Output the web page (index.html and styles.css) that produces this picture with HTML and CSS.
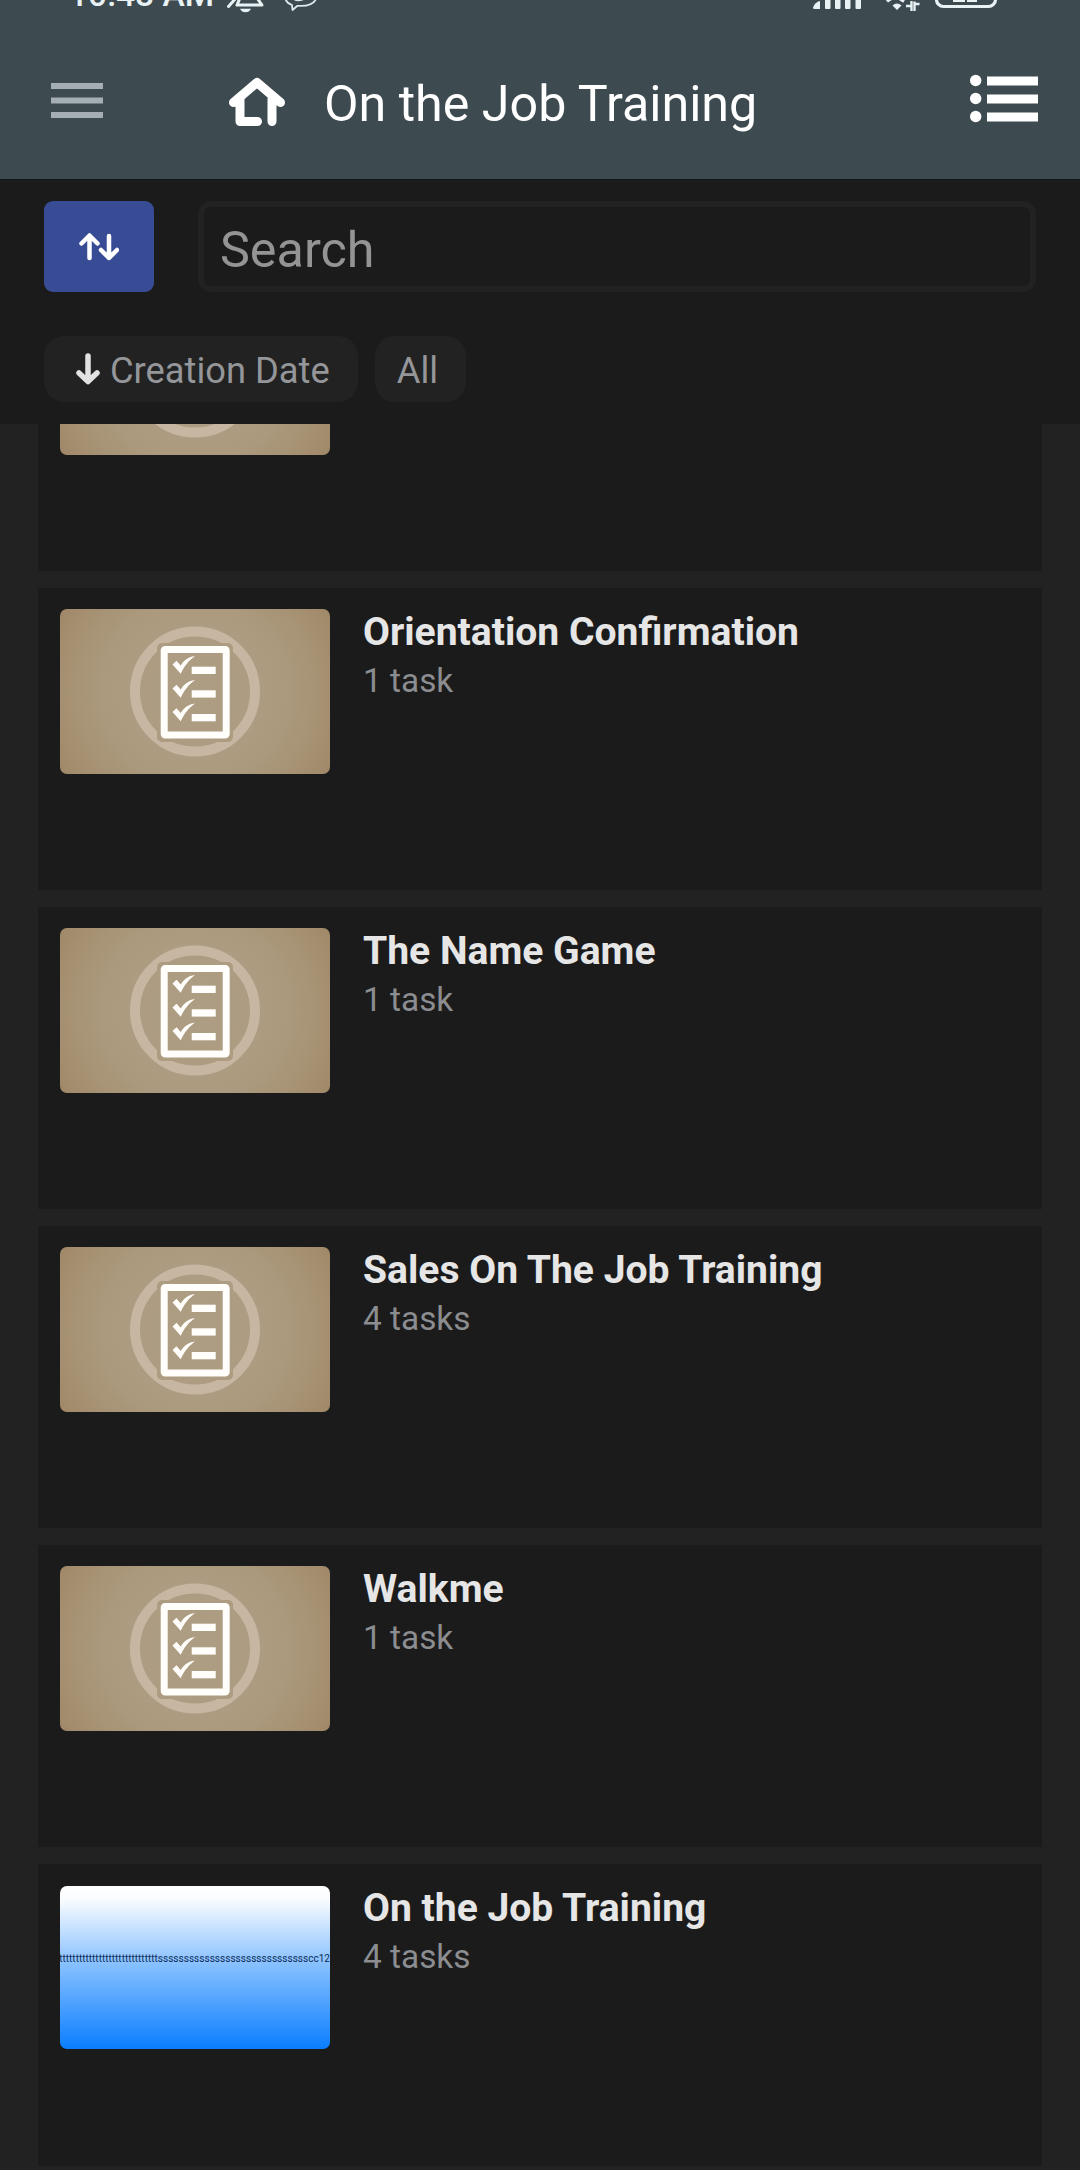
FILE: index.html
```html
<!DOCTYPE html>
<html>
<head>
    <meta charset="utf-8" />
    <title>On the Job Training</title>
    <link rel="stylesheet" href="styles.css">
</head>
<body>
    <svg class="defs" width="0" height="0">
        <defs>
            <mask id="sheet-cut">
                <rect width="270" height="165" fill="#fff" />
                <rect x="97" y="34" width="76" height="99" rx="5" fill="#000" />
            </mask>
        </defs>
        <symbol id="checklist" viewBox="0 0 270 165">
            <circle cx="135" cy="82.5" r="60" fill="none" stroke="#c7b6a2" stroke-width="10" mask="url(#sheet-cut)" />
            <rect x="104.2" y="40.5" width="62" height="85.5" rx="1" fill="none" stroke="#fffefa" stroke-width="7" stroke-linejoin="round" />
            <g fill="#fffefa">
                <path id="tick" d="M112.5 55.5l4-3.8 4.2 4.8c3.6-5.2 7.6-8.6 14.3-9.4-6 4.2-10.2 9.6-14.3 17.6z" />
                <use href="#tick" y="24" />
                <use href="#tick" y="47.5" />
                <rect x="131.7" y="57.7" width="24" height="7.3" />
                <rect x="131.7" y="81.3" width="24" height="7.3" />
                <rect x="131.7" y="105" width="24" height="7.3" />
            </g>
        </symbol>
    </svg>

    <div class="page">
        <header class="header">
            <div class="status">
                <span class="time">10:48 AM</span>
                <svg class="bell" width="38" height="13" viewBox="0 0 38 13">
                    <path d="M1.5 6.5L9 -2M13 -2l-3 7h25l-5-7" fill="none" stroke="#e8f1f3" stroke-width="3" stroke-linejoin="round" stroke-linecap="round" />
                    <path d="M13 8.7h11c-2 4.7-9 4.7-11 0z" fill="#e8f1f3" />
                </svg>
                <svg class="bubble" width="34" height="13" viewBox="0 0 34 13">
                    <path d="M1.5 -1q1 4 6.5 6l.5 5 5-4.2q15 1 18.5-6.8M10 -1q3 2.5 9 .5" fill="none" stroke="#dfe9ec" stroke-width="1.8" stroke-linejoin="round" />
                </svg>
                <svg class="signal" width="50" height="10" viewBox="0 0 50 10" fill="#e8f1f3">
                    <path d="M0 7.5Q2 2 7 1v8H1.5Q0 9 0 7.5z" />
                    <rect x="12" y="-4" width="5.5" height="13" rx="1" />
                    <rect x="22" y="-4" width="5.5" height="13" rx="1" />
                    <rect x="32" y="-4" width="5.5" height="13" rx="1" />
                    <rect x="42.5" y="-4" width="5.5" height="13" rx="1" />
                </svg>
                <svg class="wifi" width="34" height="13" viewBox="0 0 34 13" fill="#e8f1f3">
                    <path d="M6.5 5.5q4.5-4 9 0L11 10z" />
                    <path d="M1 1.5Q3-.5 5-1M14-1l4 2.5" fill="none" stroke="#e8f1f3" stroke-width="3" />
                    <path d="M25.5 1v10M20 6h5.500M28.5 11V1.5M28.5 4h5" fill="none" stroke="#e8f1f3" stroke-width="2.4" />
                </svg>
                <svg class="battery" width="63" height="10" viewBox="0 0 63 10">
                    <rect x="1.5" y="-22" width="59" height="28.5" rx="7" fill="none" stroke="#e8f1f3" stroke-width="3.2" />
                    <path d="M18 0h12v2h-12zM32 0h10v2H32z" fill="#e8f1f3" />
                </svg>
            </div>
            <div class="titlebar">
                <svg class="menu" width="52" height="36" viewBox="0 0 52 36" fill="#a5aeb3">
                    <rect width="52" height="6" />
                    <rect y="14.5" width="52" height="6" />
                    <rect y="29" width="52" height="6" />
                </svg>
                <svg class="home" width="56" height="50" viewBox="0 0 56 50">
                    <path d="M4.5 25.5L28 5.5l23.5 20M43 22v22.5M11 22v22.5h17.5" fill="none" stroke="#fff" stroke-width="9" stroke-linejoin="round" stroke-linecap="round" />
                </svg>
                <h1>On the Job Training</h1>
                <svg class="list-icon" width="68" height="50" viewBox="0 0 68 50" fill="#fff">
                    <circle cx="5.7" cy="6.5" r="5.7" />
                    <circle cx="5.7" cy="24.5" r="5.7" />
                    <circle cx="5.7" cy="42.5" r="5.7" />
                    <rect x="17" y="2.5" width="51" height="9" />
                    <rect x="17" y="20.5" width="51" height="9" />
                    <rect x="17" y="38.5" width="51" height="9" />
                </svg>
            </div>
        </header>

        <div class="filters">
            <div class="search-row">
                <button class="sort">
                    <svg width="40" height="28" viewBox="0 0 40 28" fill="none" stroke="#fff" stroke-width="4.5" stroke-linecap="round" stroke-linejoin="round">
                        <path d="M10.5 25V3M2.5 10.5l8-8 8 8M30 3v22M22 17l8 8 8-8" />
                    </svg>
                </button>
                <input class="search" type="text" placeholder="Search">
            </div>
            <div class="chips">
                <span class="chip">
                    <svg width="24" height="32" viewBox="0 0 24 32" fill="none" stroke="#e2e2e2" stroke-width="5.5" stroke-linecap="round" stroke-linejoin="round">
                        <path d="M12 3v25M3 20l9 8.5 9-8.5" />
                    </svg>
                    Creation Date
                </span>
                <span class="chip">All</span>
            </div>
        </div>

        <div class="list">
            <div class="card">
                <div class="thumb"><svg><use href="#checklist" /></svg></div>
            </div>
            <div class="card">
                <div class="thumb"><svg><use href="#checklist" /></svg></div>
                <div class="info">
                    <h2>Orientation Confirmation</h2>
                    <p>1 task</p>
                </div>
            </div>
            <div class="card">
                <div class="thumb"><svg><use href="#checklist" /></svg></div>
                <div class="info">
                    <h2>The Name Game</h2>
                    <p>1 task</p>
                </div>
            </div>
            <div class="card">
                <div class="thumb"><svg><use href="#checklist" /></svg></div>
                <div class="info">
                    <h2>Sales On The Job Training</h2>
                    <p>4 tasks</p>
                </div>
            </div>
            <div class="card">
                <div class="thumb"><svg><use href="#checklist" /></svg></div>
                <div class="info">
                    <h2>Walkme</h2>
                    <p>1 task</p>
                </div>
            </div>
            <div class="card">
                <div class="thumb blue"><span>ttttttttttttttttttttttttttttttssssssssssssssssssssssssssssscc12</span></div>
                <div class="info">
                    <h2>On the Job Training</h2>
                    <p>4 tasks</p>
                </div>
            </div>
        </div>
    </div>
</body>
</html>
```
FILE: styles.css
```css
* {
    box-sizing: border-box;
}
html, body {
    margin: 0;
    background-color: #222;
    font-family: Roboto, sans-serif;
}
h1, h2, p {
    margin: 0;
}
svg {
    display: block;
    flex: none;
}
.defs {
    position: absolute;
}

.page {
    display: flex;
    flex-direction: column;
    width: 1080px;
    height: 2170px;
    overflow: hidden;
}

/* header */
.header {
    flex: none;
    height: 179px;
    background-color: #3d4a50;
    overflow: hidden;
}
.status {
    display: flex;
    align-items: flex-start;
    height: 13px;
    padding-left: 69px;
}
.time {
    width: 158px;
    margin-top: -25px;
    font-size: 33.6px;
    font-weight: 500;
    line-height: 40px;
    white-space: nowrap;
    color: #e8f1f3;
}
.bubble {
    margin-left: 19px;
}
.signal {
    margin-left: 495px;
}
.wifi {
    margin-left: 23px;
}
.battery {
    margin-left: 15px;
}
.titlebar {
    display: flex;
    align-items: center;
    height: 180px;
    padding: 0 42px 0 51px;
    margin-top: -2px;
}
.home {
    margin: 2px 0 0 126px;
}
.titlebar h1 {
    flex: 1;
    margin: 5px 0 0 39px;
    font-size: 50.2px;
    font-weight: 400;
    line-height: 60px;
    color: #fff;
}
.list-icon {
    margin-top: -4px;
}

/* search and filters */
.filters {
    flex: none;
    height: 245px;
    padding: 22px 44px 0;
    background-color: #1b1b1b;
    border-top: 1px solid #10161a;
}
.search-row {
    display: flex;
    gap: 44px;
    height: 91px;
    margin-top: -1px;
}
.sort {
    display: flex;
    align-items: center;
    justify-content: center;
    width: 110px;
    padding: 0;
    border: 0;
    border-radius: 9px;
    background-color: #384c95;
}
.search {
    flex: 1;
    padding: 5px 0 0 16px;
    border: 6px solid #222;
    border-radius: 13px;
    background-color: #1b1b1b;
    font-family: inherit;
    font-size: 50.3px;
    color: #999;
}
.search::placeholder {
    color: #949494;
}
.chips {
    display: flex;
    gap: 17px;
    margin-top: 44px;
}
.chip {
    display: flex;
    align-items: center;
    height: 66px;
    padding: 3px 28px 0 22px;
    border-radius: 20px;
    background-color: #222;
    font-size: 36.3px;
    color: #949699;
}
.chip svg {
    margin: -3px 10px 0 10px;
}

/* course list */
.list {
    display: flex;
    flex-direction: column;
    flex: 1;
    gap: 17px;
    min-height: 0;
    padding: 0 38px;
    overflow: hidden;
}
.card {
    display: flex;
    flex: none;
    height: 302px;
    padding: 21px 22px;
    background-color: #1b1b1b;
}
/* first card is scrolled under the filters */
.card:first-child {
    margin-top: -155px;
}
.thumb {
    width: 270px;
    height: 165px;
    border-radius: 7px;
    background: radial-gradient(circle at 50% 50%, #ad9d82 0, #ad9c81 65px, #ab997d 95px, #a28b6b 150px, #9c8260 165px);
    overflow: hidden;
}
.thumb svg {
    width: 270px;
    height: 165px;
}
.thumb.blue {
    display: flex;
    justify-content: flex-end;
    height: 163px;
    margin-top: 1px;
    background: linear-gradient(#fff, #fafcff 8%, #87c0ff 48%, #0a7eff);
}
.blue span {
    margin-top: 67px;
    font-size: 10.05px;
    line-height: 12px;
    white-space: nowrap;
    color: #0c2c58;
}
.info {
    margin-left: 33px;
}
.info h2 {
    font-size: 39.1px;
    font-weight: 700;
    line-height: 46px;
    color: #e6e6e6;
}
.info p {
    margin-top: 4px;
    font-size: 33.4px;
    line-height: 44px;
    color: #8b8d90;
}
```
